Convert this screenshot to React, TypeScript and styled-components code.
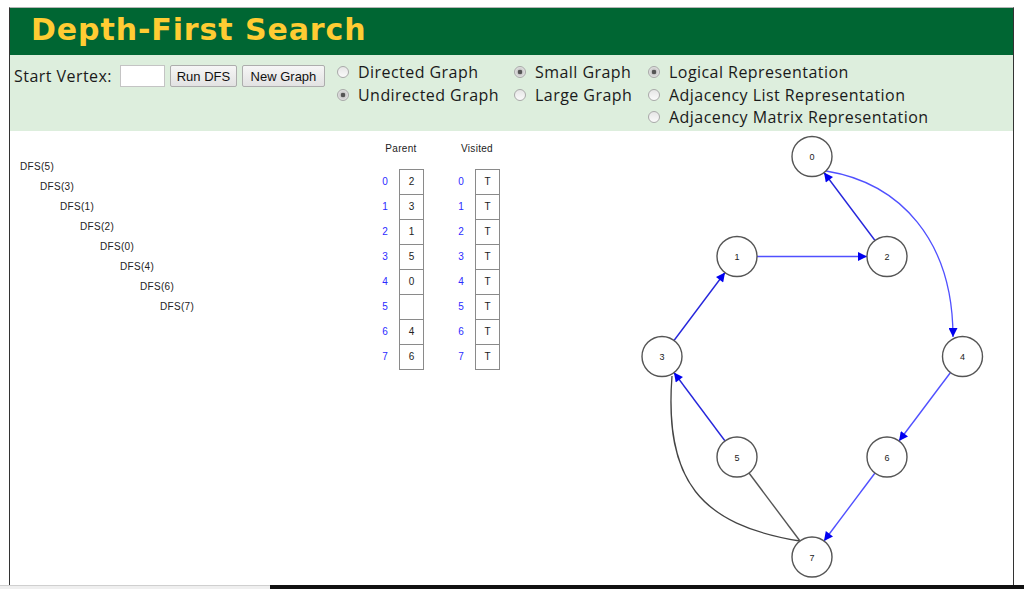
import React from 'react';
import styled, { createGlobalStyle } from 'styled-components';

const GlobalStyle = createGlobalStyle`
  html, body {
    margin: 0;
    padding: 0;
    background: #ffffff;
  }
  body {
    font-family: "Liberation Sans", Arial, sans-serif;
    color: #222;
  }
`;

const Page = styled.div`
  padding: 7px 0 0 9px;
`;

const Frame = styled.div`
  width: 1005px;
  box-sizing: border-box;
  border-top: 1px solid #b5b5b5;
  border-left: 1px solid #333;
  border-right: 1px solid #333;
`;

const Header = styled.div`
  height: 47px;
  box-sizing: border-box;
  background: #006633;
  display: flex;
  align-items: center;
  padding: 0 0 5px 21px;
`;

const Title = styled.h1`
  margin: 0;
  font-family: "DejaVu Sans", Verdana, sans-serif;
  font-weight: bold;
  font-size: 30px;
  letter-spacing: 0.9px;
  color: #ffcc33;
`;

const Controls = styled.div`
  height: 76px;
  box-sizing: border-box;
  background: #ddeedd;
  display: flex;
  align-items: flex-start;
  padding: 6px 0 0 4px;
  font-family: "Open Sans", Lato, sans-serif;
  font-size: 16px;
  letter-spacing: 0.45px;
  color: #1a1a1a;
`;

const StartBlock = styled.div`
  display: flex;
  align-items: center;
  height: 22px;
  margin-top: 4px;
  width: 323px;
`;

const StartLabel = styled.span`
  margin-right: 8px;
`;

const VertexInput = styled.input`
  width: 45px;
  height: 22px;
  box-sizing: border-box;
  border: 1px solid #c4c4c4;
  background: #fff;
  margin: 0 5px 0 0;
  padding: 0 3px;
`;

const Button = styled.button<{ $w: number }>`
  width: ${({ $w }) => $w}px;
  height: 22px;
  box-sizing: border-box;
  margin-right: 5px;
  border: 1px solid #adadad;
  border-radius: 2px;
  background: linear-gradient(#f6f6f6, #e2e2e2);
  font-family: "Liberation Sans", Arial, sans-serif;
  font-size: 13px;
  letter-spacing: 0;
  color: #111;
  padding: 0;
`;

const RadioColumn = styled.div<{ $w: number }>`
  width: ${({ $w }) => $w}px;
  display: flex;
  flex-direction: column;
`;

const RadioRow = styled.label`
  display: flex;
  align-items: center;
  height: 22.5px;
  white-space: nowrap;
`;

const RadioDot = styled.span<{ $checked?: boolean }>`
  width: 12px;
  height: 12px;
  box-sizing: border-box;
  border-radius: 50%;
  border: 1px solid #a9a9a9;
  background: ${({ $checked }) =>
    $checked
      ? 'radial-gradient(circle, #555 0 2px, #c8c8c8 2.6px, #efefef 6px)'
      : 'linear-gradient(#e6e6e6, #fafafa)'};
  margin-right: 9px;
  flex: none;
`;

const Content = styled.div`
  height: 454px;
  display: grid;
  grid-template-columns: 365px 255px 1fr;
  background: #fff;
`;

const Trace = styled.div`
  padding: 26px 0 0 10px;
`;

const TraceLine = styled.div<{ $depth: number }>`
  padding-left: ${({ $depth }) => $depth * 20}px;
  font-size: 10px;
  letter-spacing: 0.3px;
  line-height: 20px;
  color: #222;
`;

const Arrays = styled.div`
  display: flex;
  gap: 30px;
  padding: 12px 0 0 3px;
`;

const ArrayColumn = styled.div`
  display: grid;
  grid-template-columns: 14px 25px;
  column-gap: 7px;
  align-content: start;
`;

const ArrayHeader = styled.div`
  grid-column: 1 / -1;
  height: 12px;
  line-height: 12px;
  margin-bottom: 14px;
  text-align: center;
  font-size: 10px;
  letter-spacing: 0.3px;
  color: #222;
`;

const IndexLabel = styled.div`
  height: 25px;
  line-height: 25px;
  text-align: center;
  font-size: 10px;
  color: #2b2bff;
`;

const Cell = styled.div<{ $last?: boolean }>`
  height: ${({ $last }) => ($last ? 26 : 25)}px;
  box-sizing: border-box;
  border: 1px solid #8a8a8a;
  border-bottom: ${({ $last }) => ($last ? '1px solid #8a8a8a' : 'none')};
  line-height: 24px;
  text-align: center;
  font-size: 10px;
  color: #222;
`;

const GraphCanvas = styled.svg`
  display: block;
`;

const ScrollTrack = styled.div`
  display: flex;
  height: 4px;
`;

const ScrollPart = styled.div<{ $dark?: boolean; $w?: number }>`
  height: 4px;
  box-sizing: border-box;
  ${({ $w }) => ($w ? `width: ${$w}px;` : 'flex: 1;')}
  background: ${({ $dark }) => ($dark ? '#111' : '#efefef')};
  border-top: 1px solid ${({ $dark }) => ($dark ? '#111' : '#cfcfcf')};
`;

const trace = [5, 3, 1, 2, 0, 4, 6, 7];
const parents = ['2', '3', '1', '5', '0', '', '4', '6'];
const visited = ['T', 'T', 'T', 'T', 'T', 'T', 'T', 'T'];

type Pt = { x: number; y: number };
const nodes: Pt[] = [
  { x: 812, y: 156.5 },
  { x: 737, y: 256.5 },
  { x: 887, y: 256.5 },
  { x: 662, y: 356.5 },
  { x: 962.5, y: 356.5 },
  { x: 737, y: 457 },
  { x: 887, y: 457 },
  { x: 812, y: 557 },
];
const R = 20;

const DARK = '#2626dc';
const LIGHT = '#5050ff';

const straight: { a: number; b: number; color: string; arrow: boolean }[] = [
  { a: 2, b: 0, color: DARK, arrow: true },
  { a: 1, b: 2, color: LIGHT, arrow: true },
  { a: 3, b: 1, color: DARK, arrow: true },
  { a: 5, b: 3, color: DARK, arrow: true },
  { a: 4, b: 6, color: LIGHT, arrow: true },
  { a: 6, b: 7, color: LIGHT, arrow: true },
  { a: 5, b: 7, color: '#555', arrow: false },
];

function ends(a: Pt, b: Pt) {
  const dx = b.x - a.x;
  const dy = b.y - a.y;
  const d = Math.hypot(dx, dy);
  const ux = dx / d;
  const uy = dy / d;
  return {
    x1: a.x + ux * R,
    y1: a.y + uy * R,
    x2: b.x - ux * R,
    y2: b.y - uy * R,
  };
}

const Graph = () => (
  <GraphCanvas width={383} height={454} viewBox="630 131 383 454">
    <defs>
      <marker
        id="arrowhead"
        viewBox="0 0 10 10"
        refX="10"
        refY="5"
        markerWidth="11"
        markerHeight="9"
        markerUnits="userSpaceOnUse"
        orient="auto"
      >
        <path d="M0,0 L10,5 L0,10 z" fill="#0000f0" />
      </marker>
    </defs>
    {straight.map((e, i) => {
      const p = ends(nodes[e.a], nodes[e.b]);
      return (
        <line
          key={i}
          {...p}
          stroke={e.color}
          strokeWidth={1.4}
          markerEnd={e.arrow ? 'url(#arrowhead)' : undefined}
        />
      );
    })}
    <path
      d="M 826 171 C 900 183, 953 240, 953 337"
      fill="none"
      stroke={LIGHT}
      strokeWidth={1.3}
      markerEnd="url(#arrowhead)"
    />
    <path
      d="M 672 376 C 664 480, 700 525, 800 541"
      fill="none"
      stroke="#444"
      strokeWidth={1.3}
    />
    {nodes.map((n, i) => (
      <g key={i}>
        <circle cx={n.x} cy={n.y} r={R} fill="#fff" stroke="#555" strokeWidth={1.4} />
        <text
          x={n.x}
          y={n.y + 3.5}
          textAnchor="middle"
          fontFamily="Liberation Sans, Arial, sans-serif"
          fontSize={9}
          fill="#222"
        >
          {i}
        </text>
      </g>
    ))}
  </GraphCanvas>
);

const Radio = ({ label, checked }: { label: string; checked?: boolean }) => (
  <RadioRow>
    <RadioDot $checked={checked} />
    {label}
  </RadioRow>
);

export default function App() {
  return (
    <>
      <GlobalStyle />
      <Page>
        <Frame>
          <Header>
            <Title>Depth-First Search</Title>
          </Header>
          <Controls>
            <StartBlock>
              <StartLabel>Start Vertex:</StartLabel>
              <VertexInput type="text" />
              <Button $w={67}>Run DFS</Button>
              <Button $w={83}>New Graph</Button>
            </StartBlock>
            <RadioColumn $w={177}>
              <Radio label="Directed Graph" />
              <Radio label="Undirected Graph" checked />
            </RadioColumn>
            <RadioColumn $w={134}>
              <Radio label="Small Graph" checked />
              <Radio label="Large Graph" />
            </RadioColumn>
            <RadioColumn $w={300}>
              <Radio label="Logical Representation" checked />
              <Radio label="Adjacency List Representation" />
              <Radio label="Adjacency Matrix Representation" />
            </RadioColumn>
          </Controls>
          <Content>
            <Trace>
              {trace.map((v, i) => (
                <TraceLine key={i} $depth={i}>
                  DFS({v})
                </TraceLine>
              ))}
            </Trace>
            <Arrays>
              <ArrayColumn>
                <ArrayHeader>Parent</ArrayHeader>
                {parents.map((p, i) => (
                  <React.Fragment key={i}>
                    <IndexLabel>{i}</IndexLabel>
                    <Cell $last={i === parents.length - 1}>{p}</Cell>
                  </React.Fragment>
                ))}
              </ArrayColumn>
              <ArrayColumn>
                <ArrayHeader>Visited</ArrayHeader>
                {visited.map((v, i) => (
                  <React.Fragment key={i}>
                    <IndexLabel>{i}</IndexLabel>
                    <Cell $last={i === visited.length - 1}>{v}</Cell>
                  </React.Fragment>
                ))}
              </ArrayColumn>
            </Arrays>
            <Graph />
          </Content>
        </Frame>
      </Page>
      <ScrollTrack>
        <ScrollPart $w={270} />
        <ScrollPart $dark />
      </ScrollTrack>
    </>
  );
}
